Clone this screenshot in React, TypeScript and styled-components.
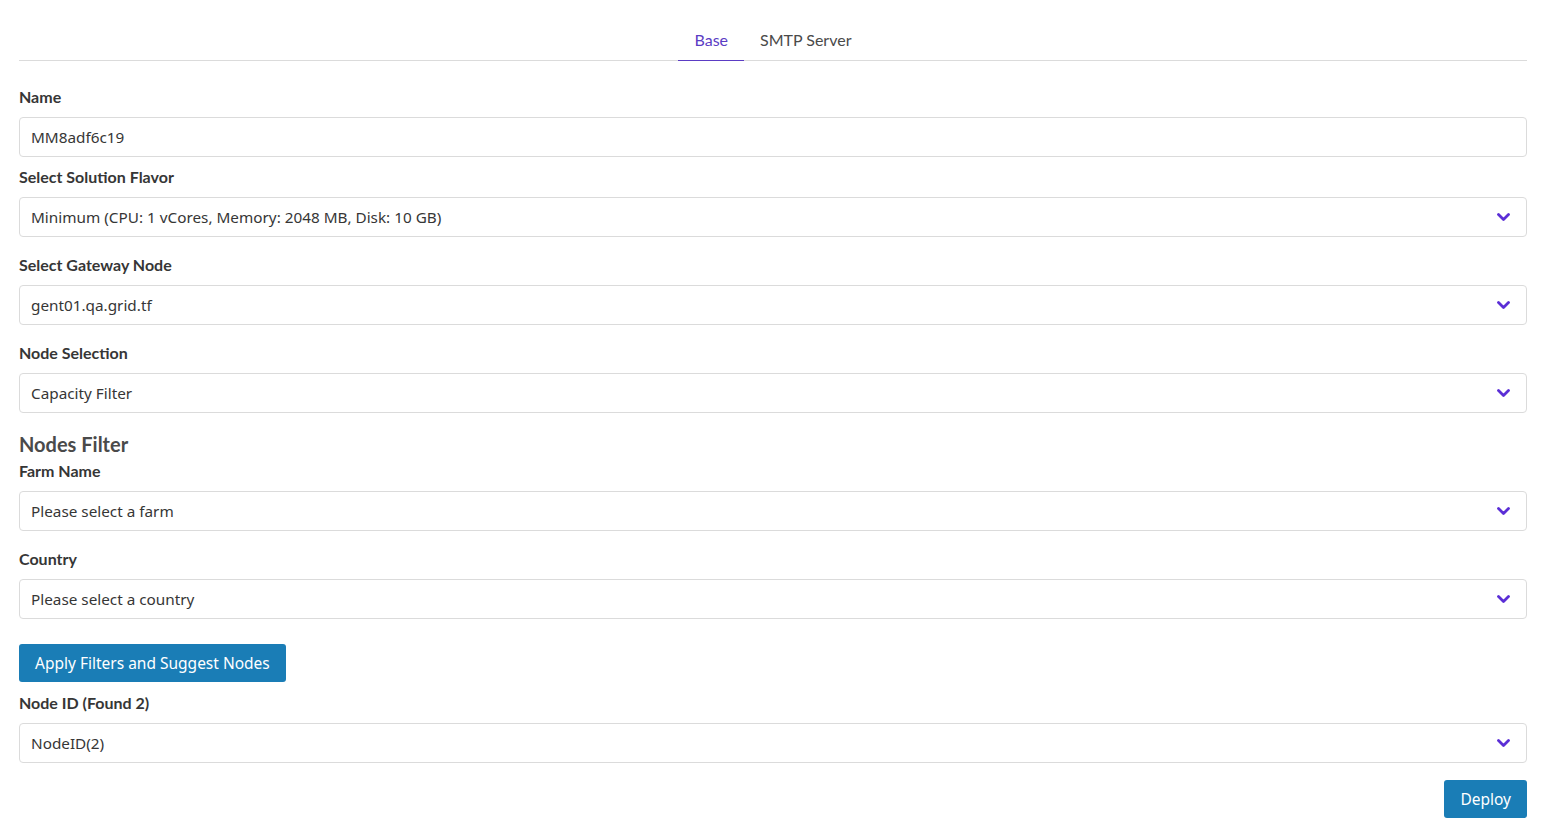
import styled, { createGlobalStyle } from 'styled-components'

const GlobalStyle = createGlobalStyle`
    body {
        margin: 0;
        background: #ffffff;
        font-family: "Lato", "Liberation Sans", sans-serif;
        color: #363636;
    }
`

const Page = styled.div`
    padding: 20px 20px 14px 19px;
`

const TabBar = styled.div`
    display: flex;
    justify-content: center;
    border-bottom: 1px solid #dbdbdb;
    margin-bottom: 24px;
`

const Tab = styled.a<{ $active?: boolean }>`
    display: block;
    padding: 8px 16px;
    margin-bottom: -1px;
    font-size: 16px;
    line-height: 24px;
    color: ${props => (props.$active ? '#5b3cc4' : '#4a4a4a')};
    border-bottom: 1px solid ${props => (props.$active ? '#5b3cc4' : 'transparent')};
    cursor: pointer;
`

const Field = styled.div<{ $gap: number }>`
    margin-bottom: ${props => props.$gap}px;
`

const Label = styled.label`
    display: block;
    font-size: 16px;
    font-weight: 700;
    line-height: 24px;
    color: #363636;
    margin-bottom: 8px;
`

const Heading = styled.h3`
    margin: 0 0 3px;
    font-size: 20px;
    font-weight: 700;
    line-height: 24px;
    color: #4a4a4a;
`

const Box = styled.div`
    position: relative;
    height: 40px;
    box-sizing: border-box;
    border: 1px solid #dbdbdb;
    border-radius: 4px;
    display: flex;
    align-items: center;
    padding: 0 11px;
    font-family: "Noto Sans", "Open Sans", sans-serif;
    font-size: 15.3px;
    color: #363636;
    background: #fff;
`

const Value = styled.span`
    flex: 1;
`

const Chevron = styled.svg`
    width: 13px;
    height: 9px;
    margin-right: 5px;
`

const Button = styled.button<{ $right?: boolean }>`
    display: block;
    margin-left: ${props => (props.$right ? 'auto' : '0')};
    height: 38px;
    padding: 0 16px;
    border: none;
    border-radius: 3px;
    background: #1a7db6;
    color: #fff;
    font-family: "Noto Sans", "Open Sans", sans-serif;
    font-size: 15.5px;
    cursor: pointer;
`

function Arrow() {
    return (
        <Chevron viewBox="0 0 13 9">
            <polyline points="1.5,1.5 6.5,6.5 11.5,1.5" fill="none" stroke="#5b2ed6" strokeWidth="2.8" strokeLinecap="round" strokeLinejoin="round" />
        </Chevron>
    )
}

function Select({ value }: { value: string }) {
    return (
        <Box>
            <Value>{value}</Value>
            <Arrow />
        </Box>
    )
}

function App() {
    return (
        <>
            <GlobalStyle />
            <Page>
                <TabBar>
                    <Tab $active>Base</Tab>
                    <Tab>SMTP Server</Tab>
                </TabBar>

                <Field $gap={8}>
                    <Label>Name</Label>
                    <Box>
                        <Value>MM8adf6c19</Value>
                    </Box>
                </Field>
                <Field $gap={16}>
                    <Label>Select Solution Flavor</Label>
                    <Select value="Minimum (CPU: 1 vCores, Memory: 2048 MB, Disk: 10 GB)" />
                </Field>
                <Field $gap={16}>
                    <Label>Select Gateway Node</Label>
                    <Select value="gent01.qa.grid.tf" />
                </Field>
                <Field $gap={19}>
                    <Label>Node Selection</Label>
                    <Select value="Capacity Filter" />
                </Field>

                <Heading>Nodes Filter</Heading>
                <Field $gap={16}>
                    <Label>Farm Name</Label>
                    <Select value="Please select a farm" />
                </Field>
                <Field $gap={25}>
                    <Label>Country</Label>
                    <Select value="Please select a country" />
                </Field>

                <Field $gap={9}>
                    <Button>Apply Filters and Suggest Nodes</Button>
                </Field>

                <Field $gap={17}>
                    <Label>Node ID (Found 2)</Label>
                    <Select value="NodeID(2)" />
                </Field>

                <Button $right>Deploy</Button>
            </Page>
        </>
    )
}

export default App
